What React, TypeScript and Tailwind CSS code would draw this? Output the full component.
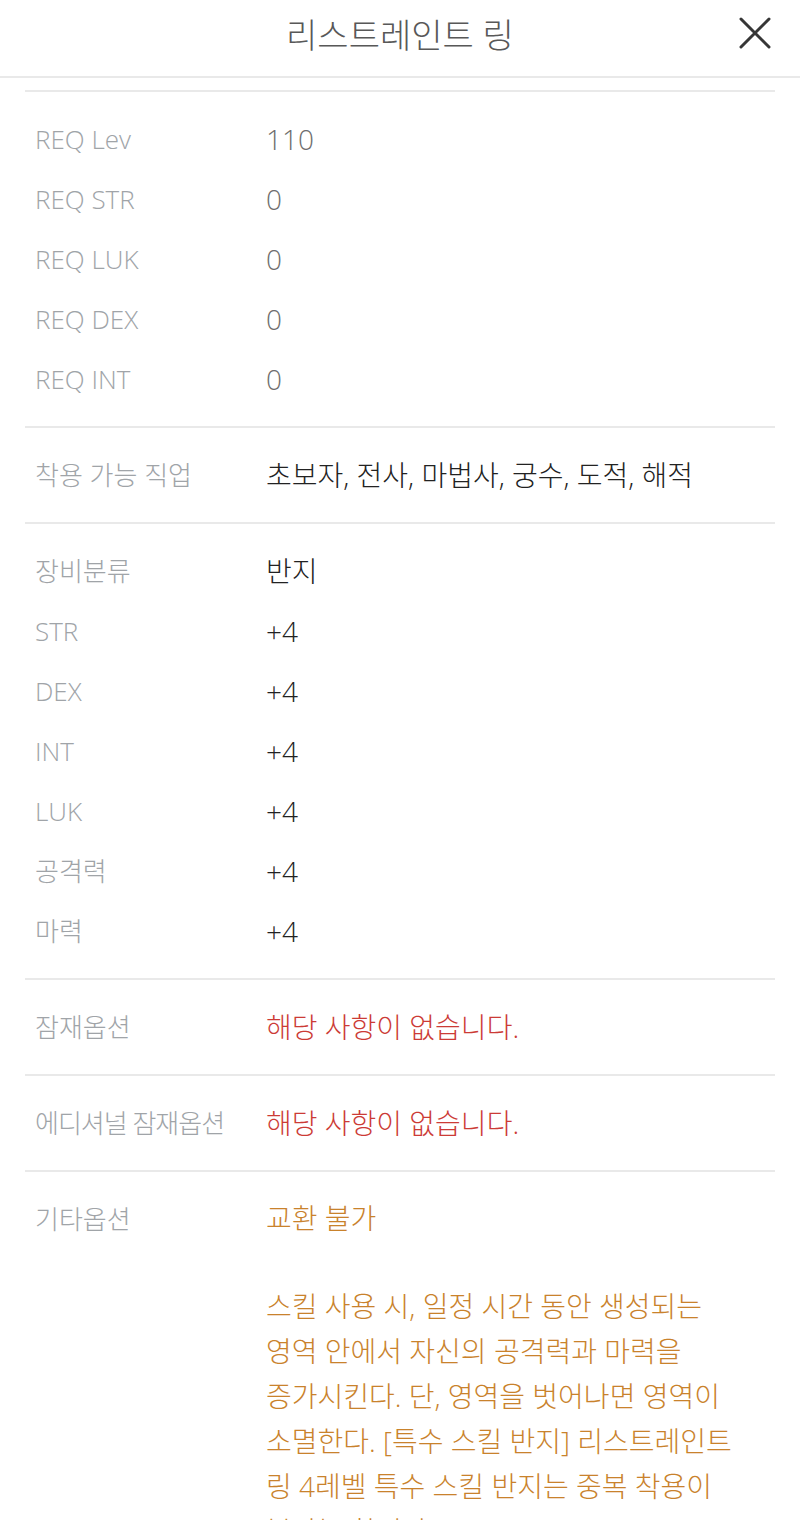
const FONT = "font-['Open_Sans','Noto_Sans_CJK_KR',sans-serif]";

type Row = { label: string; value: string; tone?: "muted" | "dark" };

const reqRows: Row[] = [
  { label: "REQ Lev", value: "110", tone: "muted" },
  { label: "REQ STR", value: "0", tone: "muted" },
  { label: "REQ LUK", value: "0", tone: "muted" },
  { label: "REQ DEX", value: "0", tone: "muted" },
  { label: "REQ INT", value: "0", tone: "muted" },
];

const statRows: Row[] = [
  { label: "장비분류", value: "반지" },
  { label: "STR", value: "+4" },
  { label: "DEX", value: "+4" },
  { label: "INT", value: "+4" },
  { label: "LUK", value: "+4" },
  { label: "공격력", value: "+4" },
  { label: "마력", value: "+4" },
];

const skillLines = [
  "스킬 사용 시, 일정 시간 동안 생성되는",
  "영역 안에서 자신의 공격력과 마력을",
  "증가시킨다. 단, 영역을 벗어나면 영역이",
  "소멸한다. [특수 스킬 반지] 리스트레인트",
  "링 4레벨 특수 스킬 반지는 중복 착용이",
  "불가능 합니다.",
];

function InfoRow({ label, value, tone = "dark" }: Row) {
  return (
    <div className="flex h-[60px] items-center">
      <div className="w-[231px] shrink-0 text-[26px] font-light text-[#a0a4a8]">{label}</div>
      <div
        className={
          tone === "muted"
            ? "text-[28px] font-light text-[#6e6e6e]"
            : "text-[28px] font-light text-[#222222]"
        }
      >
        {value}
      </div>
    </div>
  );
}

function Section({ children }: { children: React.ReactNode }) {
  return (
    <div className="border-t-2 border-[#e9e9e9] py-[17px] pl-[10px]">{children}</div>
  );
}

export default function App() {
  return (
    <div className={`h-[1520px] w-[800px] overflow-hidden bg-white ${FONT}`}>
      <header className="relative flex h-[78px] items-center justify-center border-b-2 border-[#e9e9e9]">
        <h1 className="pb-[6px] text-[34px] font-light text-[#585858]">리스트레인트 링</h1>
        <button className="absolute right-[29px] top-[17px] p-0">
          <svg width="32" height="32" viewBox="0 0 32 32" fill="none">
            <path
              d="M2 2 L30 30 M30 2 L2 30"
              stroke="#363636"
              strokeWidth="3"
              strokeLinecap="round"
            />
          </svg>
        </button>
      </header>

      <main className="mx-[25px] mt-[12px]">
        <Section>
          {reqRows.map((r) => (
            <InfoRow key={r.label} {...r} />
          ))}
        </Section>

        <Section>
          <InfoRow label="착용 가능 직업" value="초보자, 전사, 마법사, 궁수, 도적, 해적" />
        </Section>

        <Section>
          {statRows.map((r) => (
            <InfoRow key={r.label} {...r} />
          ))}
        </Section>

        <Section>
          <div className="flex h-[60px] items-center">
            <div className="w-[231px] shrink-0 text-[26px] font-light text-[#a0a4a8]">잠재옵션</div>
            <div className="text-[28px] font-light text-[#cc3b36]">해당 사항이 없습니다.</div>
          </div>
        </Section>

        <Section>
          <div className="flex h-[60px] items-center">
            <div className="w-[231px] shrink-0 text-[26px] font-light tracking-[-1px] text-[#a0a4a8]">
              에디셔널 잠재옵션
            </div>
            <div className="text-[28px] font-light text-[#cc3b36]">해당 사항이 없습니다.</div>
          </div>
        </Section>

        <Section>
          <div className="flex">
            <div className="flex h-[60px] w-[231px] shrink-0 items-center text-[26px] font-light text-[#a0a4a8]">
              기타옵션
            </div>
            <div className="pt-[7px] text-[28px] font-light leading-[45px] text-[#c9822c]">
              <div>교환 불가</div>
              <div className="h-[43px]" />
              {skillLines.map((line) => (
                <div key={line} className="whitespace-nowrap">
                  {line}
                </div>
              ))}
            </div>
          </div>
        </Section>
      </main>
    </div>
  );
}
